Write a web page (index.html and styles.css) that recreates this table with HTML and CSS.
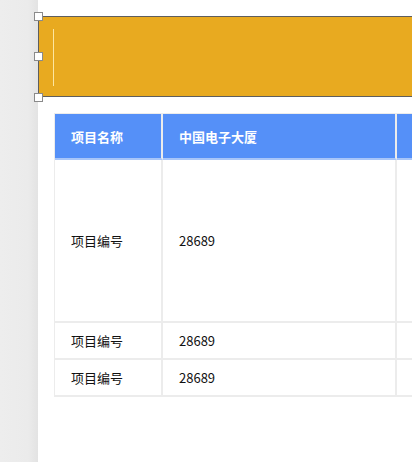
FILE: index.html
```html
<!DOCTYPE html>
<html lang="zh">
<head>
<meta charset="utf-8">
<link rel="stylesheet" href="styles.css">
</head>
<body>
<div class="canvas">
  <div class="panel">
    <div class="banner">
      <span class="caret"></span>
      <span class="handle h-top"></span>
      <span class="handle h-mid"></span>
      <span class="handle h-bot"></span>
    </div>
    <table class="grid">
      <thead>
        <tr>
          <th class="c1">项目名称</th>
          <th class="c2">中国电子大厦</th>
          <th class="c3">项目地址</th>
        </tr>
      </thead>
      <tbody>
        <tr class="tall">
          <td>项目编号</td>
          <td>28689</td>
          <td>项目编号</td>
        </tr>
        <tr>
          <td>项目编号</td>
          <td>28689</td>
          <td>项目编号</td>
        </tr>
        <tr>
          <td>项目编号</td>
          <td>28689</td>
          <td>项目编号</td>
        </tr>
      </tbody>
    </table>
  </div>
</div>
</body>
</html>
```
FILE: styles.css
```css
html, body {
  margin: 0;
  padding: 0;
  height: 100%;
  overflow: hidden;
}
body {
  background: #ececec;
  font-family: "Noto Sans CJK SC", "Noto Sans", sans-serif;
  font-size: 13px;
  color: #1a1a1a;
}
.canvas {
  height: 100%;
  background: linear-gradient(to right, #ededed 0, #ebebeb 28px, #e3e3e3 38px);
  padding-left: 38px;
  box-sizing: border-box;
}
.panel {
  background: #fff;
  height: 100%;
  padding-top: 16px;
  box-sizing: border-box;
}
.banner {
  position: relative;
  height: 79px;
  background: #e8aa20;
  border-top: 1px solid #5e5e5e;
  border-bottom: 1px solid #5e5e5e;
  border-left: 1px solid #5e5e5e;
}
.caret {
  position: absolute;
  left: 14px;
  top: 12px;
  width: 1px;
  height: 57px;
  background: #fde6a0;
}
.handle {
  position: absolute;
  left: -5px;
  width: 7px;
  height: 7px;
  background: #fff;
  border: 1px solid #8a8a8a;
}
.h-top { top: -5px; }
.h-mid { top: 35px; }
.h-bot { top: 76px; }
.grid {
  margin: 16px 0 0 16px;
  border-collapse: separate;
  border-spacing: 0;
  border-left: 1px solid #ececec;
  border-top: 1px solid #ececec;
  table-layout: fixed;
  width: 460px;
}
.grid th, .grid td {
  text-align: left;
  padding: 0 0 0 16px;
  border-right: 2px solid #ececec;
  border-bottom: 2px solid #ececec;
  white-space: nowrap;
  overflow: hidden;
}
.grid th {
  background: #5590f8;
  color: #fff;
  font-weight: 700;
  height: 44px;
  border-bottom-color: #a9c6f9;
}
.grid .c1 { width: 90px; }
.grid .c2 { width: 216px; }
.grid .c3 { width: 99px; }
.grid td {
  height: 35px;
  color: #111;
}
.grid tr.tall td {
  height: 161px;
}
```
